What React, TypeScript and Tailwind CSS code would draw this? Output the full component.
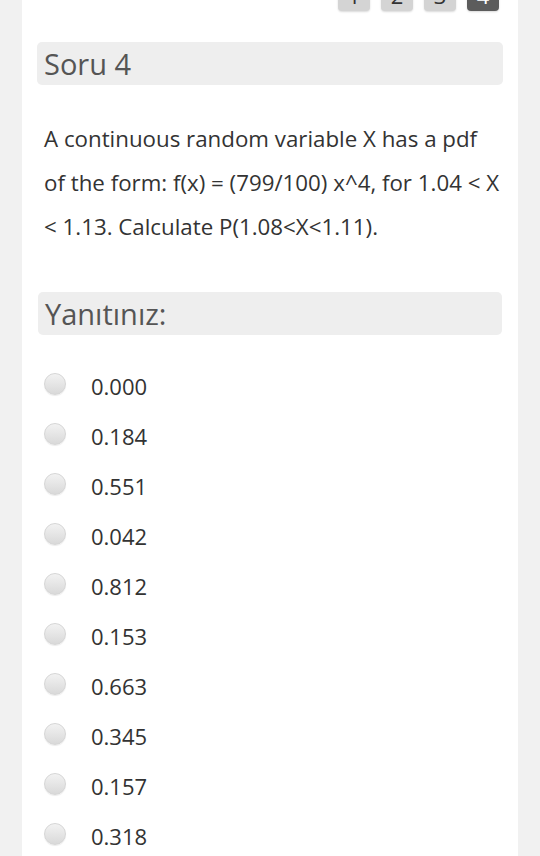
import React from 'react';

const options = ['0.000', '0.184', '0.551', '0.042', '0.812', '0.153', '0.663', '0.345', '0.157', '0.318'];

const Radio: React.FC = () => (
  <span className="block w-[22px] h-[22px] rounded-full border border-[#d6d6d6] bg-gradient-to-b from-[#f2f2f2] to-[#d9d9d9] shadow-[0_1px_1px_rgba(0,0,0,0.08)]" />
);

export default function App() {
  const pages = ['1', '2', '3', '4'];
  return (
    <div className="h-[856px] overflow-hidden bg-[#f1f1f1] font-['Open_Sans',sans-serif]">
      <div className="mx-[22px] bg-white h-full px-[15px] flex flex-col">
        <div className="flex justify-end gap-[11px] pr-[4px] -mt-[22px]">
          {pages.map((p) => (
            <div
              key={p}
              className={`w-[32px] h-[33px] rounded-[4px] flex items-center justify-center text-[22px] leading-none shadow-[0_1px_2px_rgba(0,0,0,0.15)] ${
                p === '4' ? 'bg-[#5c5c5c] text-white' : 'bg-[#d4d4d4] text-[#333]'
              }`}
            >
              {p}
            </div>
          ))}
        </div>

        <div className="mt-[31px] h-[43px] shrink-0 rounded-[5px] bg-[#eeeeee] px-[7px] flex items-center">
          <h2 className="text-[29px] text-[#555] leading-none">Soru 4</h2>
        </div>

        <p className="mt-[32px] pl-[7px] text-[22.3px] leading-[44px] text-[#333]">
          A continuous random variable X has a pdf of the form: f(x) = (799/100) x^4, for 1.04 &lt; X &lt; 1.13. Calculate P(1.08&lt;X&lt;1.11).
        </p>

        <div className="mt-[43px] mx-[1px] h-[43px] shrink-0 rounded-[5px] bg-[#eeeeee] px-[7px] flex items-center">
          <h3 className="text-[29px] text-[#555] leading-none">Yanıtınız:</h3>
        </div>

        <div className="mt-[26px] flex flex-col">
          {options.map((o) => (
            <label key={o} className="h-[50px] shrink-0 flex items-center pl-[7px]">
              <span className="-mt-[5px]">
                <Radio />
              </span>
              <span className="ml-[25px] text-[22px] text-[#333]">{o}</span>
            </label>
          ))}
        </div>
      </div>
    </div>
  );
}
